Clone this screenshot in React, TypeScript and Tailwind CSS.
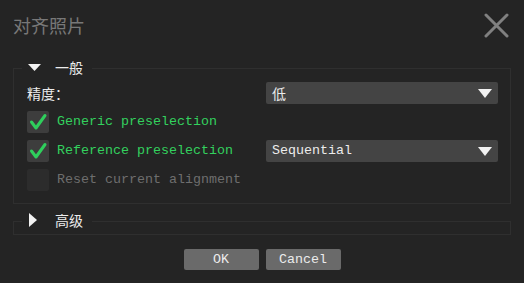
import React from "react";

const cjk = { fontFamily: '"Noto Sans CJK SC", "Noto Sans", sans-serif' };
const mono = { fontFamily: '"Liberation Mono", "DejaVu Sans Mono", "Noto Sans CJK SC", monospace' };

const DownTri = ({ w = 14, h = 9 }: { w?: number; h?: number }) => (
  <svg width={w} height={h} viewBox={`0 0 ${w} ${h}`}>
    <polygon points={`0,0 ${w},0 ${w / 2},${h}`} fill="#f2f2f2" />
  </svg>
);

const Check = () => (
  <svg width="22" height="22" viewBox="0 0 22 22">
    <polyline
      points="4.5,11 9,17 18,4.5"
      fill="none"
      stroke="#2fcf5c"
      strokeWidth="3"
      strokeLinecap="round"
      strokeLinejoin="round"
    />
  </svg>
);

const Select = ({ value, isMono }: { value: string; isMono?: boolean }) => (
  <div className="w-[232px] h-[22px] bg-[#444444] rounded-[2px] flex items-center justify-between pl-[6px] pr-[6px]">
    <span
      className={isMono ? "text-[13.33px] text-[#ececec]" : "text-[14px] text-[#ececec]"}
      style={isMono ? mono : cjk}
    >
      {value}
    </span>
    <DownTri />
  </div>
);

const CheckRow = ({
  label,
  checked,
  disabled,
}: {
  label: string;
  checked?: boolean;
  disabled?: boolean;
}) => (
  <div className="flex items-center gap-[8px]">
    <div
      className={
        disabled
          ? "w-[22px] h-[22px] rounded-[2px] bg-[#2c2c2c]"
          : "w-[22px] h-[22px] rounded-[2px] bg-[#3d3d3d]"
      }
    >
      {checked && <Check />}
    </div>
    <span
      className={disabled ? "text-[13.33px] text-[#6e6e6e]" : "text-[13.33px] text-[#33d15e]"}
      style={mono}
    >
      {label}
    </span>
  </div>
);

export default function App() {
  return (
    <div className="w-[524px] h-[283px] bg-[#242424] overflow-hidden">
      <div className="h-[68px] flex justify-between items-start pl-[13px] pr-[15px]">
        <span className="mt-[13px] text-[18px] leading-[24px] text-[#787878]" style={cjk}>
          对齐照片
        </span>
        <svg className="mt-[13px]" width="25" height="25" viewBox="0 0 25 25">
          <path
            d="M2 2 L23 23 M23 2 L2 23"
            stroke="#808080"
            strokeWidth="3"
            strokeLinecap="round"
          />
        </svg>
      </div>

      <div className="relative mx-[13px] border border-[#2f2f2f] pt-[13px] pb-[12px] pl-[13px] pr-[12px]">
        <div className="absolute left-[8px] top-[-12px] bg-[#242424] flex items-center h-[20px] pl-[6px] pr-[9px] gap-[14px]">
          <DownTri w={13} h={7} />
          <span className="text-[14px] leading-[20px] text-[#ececec]" style={cjk}>
            一般
          </span>
        </div>
        <div className="flex flex-col gap-[7px]">
          <div className="flex items-center justify-between">
            <span className="text-[14px] text-[#ececec]" style={cjk}>
              精度：
            </span>
            <Select value="低" />
          </div>
          <CheckRow label="Generic preselection" checked />
          <div className="flex items-center justify-between">
            <CheckRow label="Reference preselection" checked />
            <Select value="Sequential" isMono />
          </div>
          <CheckRow label="Reset current alignment" disabled />
        </div>
      </div>

      <div className="relative mx-[13px] mt-[17px] h-[14px] border border-[#2f2f2f]">
        <div className="absolute left-[8px] top-[-12px] bg-[#242424] flex items-center h-[20px] pl-[7px] pr-[9px] gap-[18px]">
          <svg width="8" height="14" viewBox="0 0 8 14">
            <polygon points="0,0 8,7 0,14" fill="#f2f2f2" />
          </svg>
          <span className="text-[14px] leading-[20px] text-[#ececec]" style={cjk}>
            高级
          </span>
        </div>
      </div>

      <div className="flex justify-center gap-[7px] mt-[14px]">
        <button
          className="w-[75px] h-[21px] bg-[#6a6a6a] rounded-[2px] text-[13.33px] text-[#ececec]"
          style={mono}
        >
          OK
        </button>
        <button
          className="w-[75px] h-[21px] bg-[#6a6a6a] rounded-[2px] text-[13.33px] text-[#ececec]"
          style={mono}
        >
          Cancel
        </button>
      </div>
    </div>
  );
}
